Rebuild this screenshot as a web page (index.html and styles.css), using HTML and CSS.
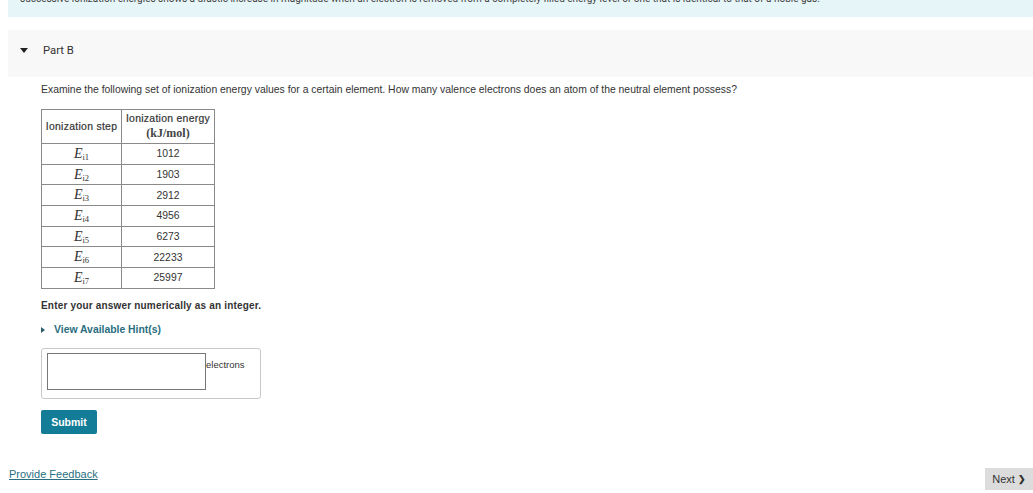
FILE: index.html
```html
<!DOCTYPE html>
<html>
<head>
<meta charset="utf-8">
<link rel="stylesheet" href="styles.css">
</head>
<body>
<div class="banner"><p class="banner-text">successive ionization energies shows a drastic increase in magnitude when an electron is removed from a completely filled energy level or one that is identical to that of a noble gas.</p></div>
<div class="part-head"><span class="caret"></span><span class="part-title">Part B</span></div>
<div class="content">
  <p class="question">Examine the following set of ionization energy values for a certain element. How many valence electrons does an atom of the neutral element possess?</p>
  <table class="ie-table">
    <thead>
      <tr><th class="c1">Ionization step</th><th class="c2">Ionization energy<br><span class="unit">(kJ/mol)</span></th></tr>
    </thead>
    <tbody>
      <tr><td class="step"><i>E</i><sub>i1</sub></td><td>1012</td></tr>
      <tr><td class="step"><i>E</i><sub>i2</sub></td><td>1903</td></tr>
      <tr><td class="step"><i>E</i><sub>i3</sub></td><td>2912</td></tr>
      <tr><td class="step"><i>E</i><sub>i4</sub></td><td>4956</td></tr>
      <tr><td class="step"><i>E</i><sub>i5</sub></td><td>6273</td></tr>
      <tr><td class="step"><i>E</i><sub>i6</sub></td><td>22233</td></tr>
      <tr><td class="step"><i>E</i><sub>i7</sub></td><td>25997</td></tr>
    </tbody>
  </table>
  <p class="instr">Enter your answer numerically as an integer.</p>
  <p class="hint"><span class="hint-caret"></span>View Available Hint(s)</p>
  <div class="answer-box"><div class="answer-input"></div><span class="units">electrons</span></div>
  <button class="submit">Submit</button>
</div>
<div class="footer">
  <a class="feedback" href="#">Provide Feedback</a>
  <span class="next">Next <span class="chev">&#10095;</span></span>
</div>
</body>
</html>
```
FILE: styles.css
```css
html, body { margin: 0; padding: 0; background: #fff; }
body { font-family: "Liberation Sans", Arial, sans-serif; color: #333; width: 1033px; height: 493px; overflow: hidden; }
.banner { margin-left: 8px; height: 17px; background: #e6f5f7; overflow: hidden; }
.banner-text { margin: -8px 0 0 12px; font-family: Roboto, "Liberation Sans", sans-serif; font-size: 10px; line-height: 14px; color: #444; white-space: nowrap; }
.part-head { margin: 13px 0 0 8px; height: 47px; background: #f8f8f8; display: flex; align-items: center; padding-bottom: 6px; box-sizing: border-box; }
.caret { width: 0; height: 0; border-left: 4px solid transparent; border-right: 4px solid transparent; border-top: 5px solid #222; margin-left: 12px; margin-right: 15px; }
.part-title { font-family: Roboto, "Liberation Sans", sans-serif; font-size: 11.3px; color: #333; }
.content { padding-left: 41px; padding-top: 6px; }
.question { margin: 0; font-size: 10.4px; line-height: 14px; color: #333; }
.ie-table { border-collapse: collapse; margin-top: 12px; font-size: 10.4px; color: #333; }
.ie-table th, .ie-table td { border: 1px solid #8a8a8a; text-align: center; padding: 0; }
.ie-table th { font-weight: normal; height: 33px; letter-spacing: 0.3px; -webkit-text-stroke: 0.2px #333; }
.ie-table th.c1 { width: 79px; }
.ie-table th.c2 { width: 92px; line-height: 14px; }
.unit { font-family: "Liberation Serif", "Times New Roman", serif; font-size: 12px; font-weight: bold; color: #444; -webkit-text-stroke: 0; letter-spacing: 0; }
.ie-table td { height: 19.7px; }
.step { font-family: "Liberation Serif", "Times New Roman", serif; font-size: 14px; }
.step i { font-style: italic; }
.step sub { font-size: 8.5px; vertical-align: -2px; }
.instr { margin: 10px 0 0; font-size: 10px; font-weight: bold; letter-spacing: 0.18px; color: #333; line-height: 14px; }
.hint { margin: 10px 0 0; font-size: 10.4px; font-weight: bold; color: #2a6e80; display: flex; align-items: center; line-height: 14px; }
.hint-caret { width: 0; height: 0; border-top: 3.5px solid transparent; border-bottom: 3.5px solid transparent; border-left: 4px solid #2a5c6a; margin: 0 9px 0 0; }
.answer-box { margin-top: 11px; width: 220px; height: 51px; border: 1px solid #c8c8c8; border-radius: 3px; box-sizing: border-box; display: flex; align-items: flex-start; padding: 4px 0 0 5px; }
.answer-input { width: 159px; height: 37px; border: 1px solid #777; box-sizing: border-box; background: #fff; }
.units { font-size: 9.5px; margin-top: 6px; color: #333; }
.submit { display: block; margin-top: 11px; width: 56px; height: 24px; border: none; border-radius: 2px; background: #137d98; color: #fff; font-family: "Liberation Sans", Arial, sans-serif; font-weight: bold; font-size: 10.5px; padding: 0; }
.footer { display: flex; justify-content: space-between; align-items: flex-start; margin-top: 33px; padding-left: 9px; }
.feedback { font-size: 11px; line-height: 14px; color: #2a6f82; text-decoration: underline; }
.next { background: #dcdcdc; width: 48px; height: 22px; display: flex; align-items: center; justify-content: center; font-size: 11px; color: #333; margin-top: 1px; }
.chev { font-size: 9px; font-weight: bold; margin-left: 3px; }
```
